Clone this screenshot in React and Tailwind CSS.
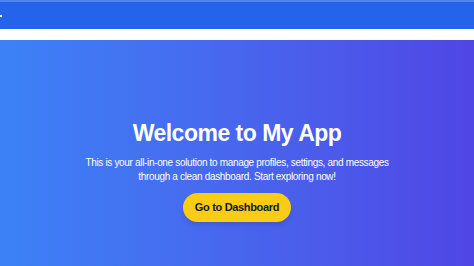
import React from 'react';

const App = () => {
  return (
    <div className="w-full min-h-[266px] bg-white" style={{ fontFamily: '"Liberation Sans", Arial, sans-serif' }}>
      <div className="h-[2px] bg-[#4d84f0]" />
      <nav className="h-[27px] bg-[#2563eb] flex items-center">
        <span className="w-[2px] h-[2px] bg-white" />
      </nav>
      <div className="h-[11px] bg-white" />

      <section className="h-[226px] bg-gradient-to-r from-[#3b82f6] to-[#4f46e5] flex flex-col items-center pt-[80px] text-white text-center">
        <h1 className="text-[23px] leading-[26px] font-bold tracking-[-0.5px]">Welcome to My App</h1>
        <p className="mt-[10px] max-w-[312px] text-[10px] leading-[13.5px] tracking-[-0.33px] text-white">
          This is your all-in-one solution to manage profiles, settings, and messages through a clean dashboard. Start exploring now!
        </p>
        <button className="mt-[10px] h-[29px] px-[12px] rounded-full bg-[#facc15] text-[#111827] text-[11px] tracking-[-0.33px] font-bold shadow-md">
          Go to Dashboard
        </button>
      </section>
    </div>
  );
};

export default App;
